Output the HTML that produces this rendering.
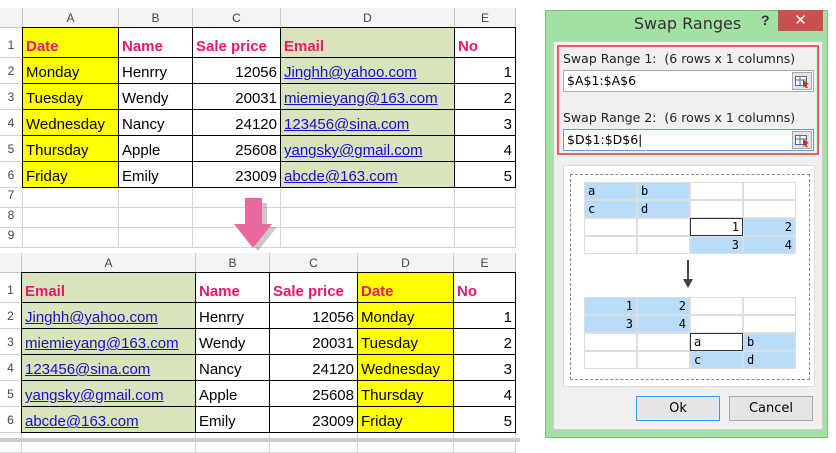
<!DOCTYPE html><html><head><style>
*{margin:0;padding:0;box-sizing:border-box}
body{width:836px;height:442px;background:#fff;position:relative;overflow:hidden;font-family:"Liberation Sans",Arial,sans-serif}
.a{position:absolute}
.sh{position:absolute;display:grid}
.sh div{border-right:1px solid #d4d4d4;border-bottom:1px solid #d4d4d4;font-size:15px;white-space:nowrap;overflow:hidden;padding:0 3px 1px;display:flex;align-items:flex-end;line-height:18px}
.sh .h{background:#f4f4f4;color:#444;font-size:12px;justify-content:center;align-items:center;border-color:#c6c6c6;padding:0}
.sh .n{color:#444;font-size:12px;justify-content:center;padding:0 0 3px}
.sh .k{border-color:#000}
.hd{color:#f0166b;font-weight:bold}
.y{background:#ffff00}
.g{background:#d8e4bc}
.sh .r{justify-content:flex-end}
.l{color:#1a0dcc;text-decoration:underline}
.gr div{position:absolute;width:53px;height:18px;border:1px solid #ddd;font-family:"DejaVu Sans Mono","Liberation Mono",monospace;font-size:12px;line-height:16px;padding:0 3px}
.bl{background:#b9dcfb}
.dj{font-family:"DejaVu Sans",sans-serif}
</style></head><body>

<div class="sh" style="left:0;top:8px;grid-template-columns:23px 96px 74px 88px 174px 61px;grid-template-rows:20px 30px 26px 26px 26px 26px 26px 20px 20px 20px">
<div class="h"></div><div class="h">A</div><div class="h">B</div><div class="h">C</div><div class="h">D</div><div class="h">E</div>
<div class="n">1</div><div class="k hd y">Date</div><div class="k hd">Name</div><div class="k hd">Sale price</div><div class="k hd g">Email</div><div class="k hd">No</div>
<div class="n">2</div><div class="k y">Monday</div><div class="k">Henrry</div><div class="k r">12056</div><div class="k g"><span class="l">Jinghh@yahoo.com</span></div><div class="k r">1</div>
<div class="n">3</div><div class="k y">Tuesday</div><div class="k">Wendy</div><div class="k r">20031</div><div class="k g"><span class="l">miemieyang@163.com</span></div><div class="k r">2</div>
<div class="n">4</div><div class="k y">Wednesday</div><div class="k">Nancy</div><div class="k r">24120</div><div class="k g"><span class="l">123456@sina.com</span></div><div class="k r">3</div>
<div class="n">5</div><div class="k y">Thursday</div><div class="k">Apple</div><div class="k r">25608</div><div class="k g"><span class="l">yangsky@gmail.com</span></div><div class="k r">4</div>
<div class="n">6</div><div class="k y">Friday</div><div class="k">Emily</div><div class="k r">23009</div><div class="k g"><span class="l">abcde@163.com</span></div><div class="k r">5</div>
<div class="n">7</div><div></div><div></div><div></div><div></div><div></div>
<div class="n">8</div><div></div><div></div><div></div><div></div><div></div>
<div class="n">9</div><div></div><div></div><div></div><div></div><div></div>
</div>
<div class="a" style="left:22px;top:27px;width:494px;height:1px;background:#000"></div>
<div class="a" style="left:22px;top:27px;width:1px;height:161px;background:#000"></div>

<div class="sh" style="left:0;top:253px;grid-template-columns:22px 174px 74px 88px 96px 62px;grid-template-rows:20px 30px 26px 26px 26px 26px 26px 20px">
<div class="h"></div><div class="h">A</div><div class="h">B</div><div class="h">C</div><div class="h">D</div><div class="h">E</div>
<div class="n">1</div><div class="k hd g">Email</div><div class="k hd">Name</div><div class="k hd">Sale price</div><div class="k hd y">Date</div><div class="k hd">No</div>
<div class="n">2</div><div class="k g"><span class="l">Jinghh@yahoo.com</span></div><div class="k">Henrry</div><div class="k r">12056</div><div class="k y">Monday</div><div class="k r">1</div>
<div class="n">3</div><div class="k g"><span class="l">miemieyang@163.com</span></div><div class="k">Wendy</div><div class="k r">20031</div><div class="k y">Tuesday</div><div class="k r">2</div>
<div class="n">4</div><div class="k g"><span class="l">123456@sina.com</span></div><div class="k">Nancy</div><div class="k r">24120</div><div class="k y">Wednesday</div><div class="k r">3</div>
<div class="n">5</div><div class="k g"><span class="l">yangsky@gmail.com</span></div><div class="k">Apple</div><div class="k r">25608</div><div class="k y">Thursday</div><div class="k r">4</div>
<div class="n">6</div><div class="k g"><span class="l">abcde@163.com</span></div><div class="k">Emily</div><div class="k r">23009</div><div class="k y">Friday</div><div class="k r">5</div>
<div class="n"></div><div></div><div></div><div></div><div></div><div></div>
</div>
<div class="a" style="left:21px;top:272px;width:495px;height:1px;background:#000"></div>
<div class="a" style="left:21px;top:272px;width:1px;height:161px;background:#000"></div>
<div class="a" style="left:0;top:438px;width:520px;height:4px;background:#ccc"></div>

<svg class="a" style="left:226px;top:198px" width="54" height="56"><polygon points="21,2 38,2 38,26 48,26 29,50 10,26 21,26" fill="#666" opacity=".35" transform="translate(3,3)"/><polygon points="19,0 36,0 36,26 46,26 27,50 8,26 19,26" fill="#e96a9f"/></svg>

<div class="a" style="left:545px;top:10px;width:283px;height:428px;background:#a3e0a3;border:1px solid #7fbf7f"></div>
<div class="a dj" style="left:600px;top:14px;width:175px;text-align:center;font-size:16px;color:#333">Swap Ranges</div>
<div class="a" style="left:761px;top:12px;font-size:14px;font-weight:bold;color:#333">?</div>
<div class="a" style="left:778px;top:10px;width:45px;height:21px;background:#c75050;color:#fff;text-align:center;font-size:15px;line-height:21px">✕</div>
<div class="a" style="left:553px;top:41px;width:270px;height:389px;background:#f0f0f0;border:1px solid #ccc"></div>
<div class="a" style="left:557px;top:45px;width:262px;height:110px;border:2px solid #e86060"></div>
<div class="a dj" style="left:563px;top:51px;font-size:12.5px;color:#222">Swap Range 1:&nbsp; (6 rows x 1 columns)</div>
<div class="a dj" style="left:563px;top:70px;width:251px;height:22px;background:#fff;border:1px solid #aaa;font-size:12.5px;line-height:20px;padding-left:3px">$A$1:$A$6</div>
<div class="a dj" style="left:563px;top:110px;font-size:12.5px;color:#222">Swap Range 2:&nbsp; (6 rows x 1 columns)</div>
<div class="a dj" style="left:563px;top:129px;width:251px;height:22px;background:#fff;border:1px solid #5aa0e0;font-size:12.5px;line-height:20px;padding-left:3px">$D$1:$D$6|</div>
<svg class="a" style="left:792px;top:72px" width="20" height="18"><rect x=".5" y=".5" width="19" height="17" fill="#e4e4e4" stroke="#aaa"/><rect x="3.5" y="4.5" width="11" height="9" fill="#fff" stroke="#4a6a9a"/><line x1="3" y1="8" x2="15" y2="8" stroke="#4a6a9a"/><line x1="8" y1="4" x2="8" y2="14" stroke="#4a6a9a"/><polygon points="11,8 17,12 14,13 16,16 14,16 12,14 11,16" fill="#d03020"/></svg>
<svg class="a" style="left:792px;top:131px" width="20" height="18"><rect x=".5" y=".5" width="19" height="17" fill="#e4e4e4" stroke="#aaa"/><rect x="3.5" y="4.5" width="11" height="9" fill="#fff" stroke="#4a6a9a"/><line x1="3" y1="8" x2="15" y2="8" stroke="#4a6a9a"/><line x1="8" y1="4" x2="8" y2="14" stroke="#4a6a9a"/><polygon points="11,8 17,12 14,13 16,16 14,16 12,14 11,16" fill="#d03020"/></svg>
<div class="a" style="left:563px;top:165px;width:252px;height:222px;border:1px solid #ddd;background:#fff"></div>
<div class="a" style="left:570px;top:174px;width:240px;height:206px;border:1px dashed #888"></div>

<div class="gr">
<div class="bl" style="left:584px;top:182px">a</div><div class="bl" style="left:637px;top:182px">b</div><div style="left:690px;top:182px"></div><div style="left:743px;top:182px"></div>
<div class="bl" style="left:584px;top:200px">c</div><div class="bl" style="left:637px;top:200px">d</div><div style="left:690px;top:200px"></div><div style="left:743px;top:200px"></div>
<div style="left:584px;top:218px"></div><div style="left:637px;top:218px"></div><div style="left:690px;top:218px;border:1.5px solid #333;text-align:right">1</div><div class="bl" style="left:743px;top:218px;text-align:right">2</div>
<div style="left:584px;top:236px"></div><div style="left:637px;top:236px"></div><div class="bl" style="left:690px;top:236px;text-align:right">3</div><div class="bl" style="left:743px;top:236px;text-align:right">4</div>
<div class="bl" style="left:584px;top:297px;text-align:right">1</div><div class="bl" style="left:637px;top:297px;text-align:right">2</div><div style="left:690px;top:297px"></div><div style="left:743px;top:297px"></div>
<div class="bl" style="left:584px;top:315px;text-align:right">3</div><div class="bl" style="left:637px;top:315px;text-align:right">4</div><div style="left:690px;top:315px"></div><div style="left:743px;top:315px"></div>
<div style="left:584px;top:333px"></div><div style="left:637px;top:333px"></div><div style="left:690px;top:333px;border:1.5px solid #333">a</div><div class="bl" style="left:743px;top:333px">b</div>
<div style="left:584px;top:351px"></div><div style="left:637px;top:351px"></div><div class="bl" style="left:690px;top:351px">c</div><div class="bl" style="left:743px;top:351px">d</div>
</div>
<svg class="a" style="left:682px;top:260px" width="12" height="30"><line x1="6" y1="0" x2="6" y2="20" stroke="#444" stroke-width="2"/><polygon points="1,19 11,19 6,28" fill="#444"/></svg>

<div class="a dj" style="left:636px;top:396px;width:84px;height:25px;background:#e5e5e5;border:1px solid #3c9be8;text-align:center;line-height:23px;font-size:13px">Ok</div>
<div class="a dj" style="left:729px;top:396px;width:84px;height:25px;background:#e5e5e5;border:1px solid #aaa;text-align:center;line-height:23px;font-size:13px">Cancel</div>
</body></html>
